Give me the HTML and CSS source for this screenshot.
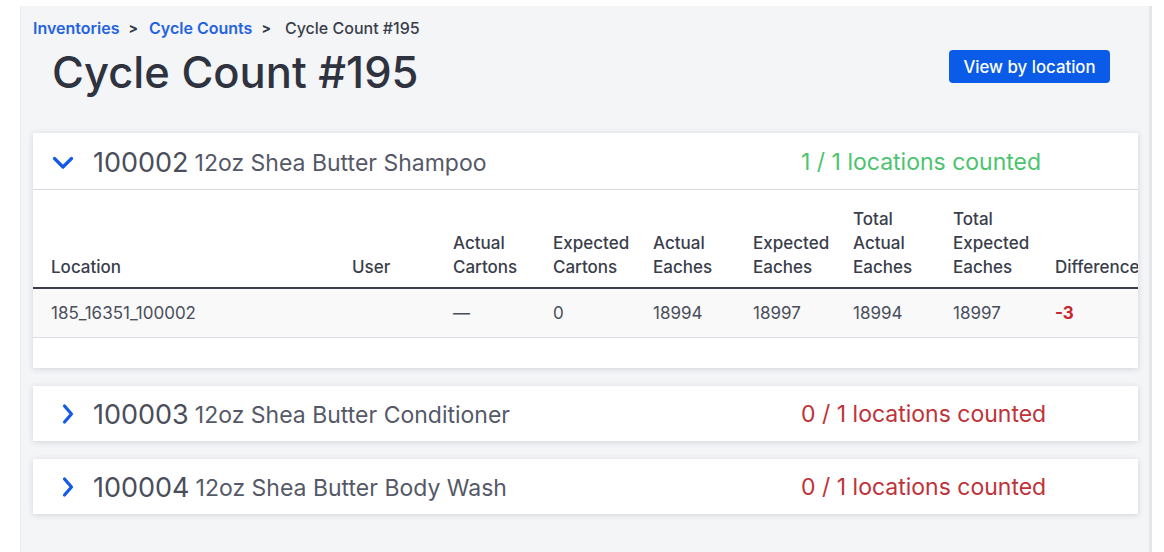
FILE: index.html
```html
<!DOCTYPE html>
<html>
<head>
<meta charset="utf-8">
<link rel="stylesheet" href="styles.css">
</head>
<body>
<div class="frame">
  <div class="main">
    <nav class="crumbs">
      <a class="crumb-link" href="#">Inventories</a>
      <span class="crumb-sep">&gt;</span>
      <a class="crumb-link" href="#">Cycle Counts</a>
      <span class="crumb-sep">&gt;</span>
      <span class="crumb-current">Cycle Count #195</span>
    </nav>
    <div class="page-head">
      <h1 class="page-title">Cycle Count #195</h1>
      <button class="btn-primary">View by location</button>
    </div>

    <section class="card">
      <div class="card-head open">
        <div class="card-title">
          <svg class="chev chev-down" viewBox="0 0 22 14" width="22" height="14"><path d="M2.5 2.5 L11 11 L19.5 2.5" fill="none" stroke="#1559e8" stroke-width="3.2" stroke-linecap="round" stroke-linejoin="round"/></svg>
          <span class="sku">100002</span>
          <span class="pname">12oz Shea Butter Shampoo</span>
        </div>
        <div class="status ok">1 / 1 locations counted</div>
      </div>
      <div class="table-wrap">
        <table class="counts">
          <thead>
            <tr>
              <th class="c-loc">Location</th>
              <th class="c-user">User</th>
              <th>Actual<br>Cartons</th>
              <th>Expected<br>Cartons</th>
              <th>Actual<br>Eaches</th>
              <th>Expected<br>Eaches</th>
              <th>Total<br>Actual<br>Eaches</th>
              <th>Total<br>Expected<br>Eaches</th>
              <th class="c-diff">Difference</th>
            </tr>
          </thead>
          <tbody>
            <tr>
              <td>185_16351_100002</td>
              <td></td>
              <td>—</td>
              <td>0</td>
              <td>18994</td>
              <td>18997</td>
              <td>18994</td>
              <td>18997</td>
              <td class="neg">-3</td>
            </tr>
          </tbody>
        </table>
      </div>
    </section>

    <section class="card">
      <div class="card-head">
        <div class="card-title">
          <svg class="chev chev-right" viewBox="0 0 14 22" width="14" height="22"><path d="M3.5 3 L10.5 11 L3.5 19" fill="none" stroke="#1559e8" stroke-width="3.2" stroke-linecap="round" stroke-linejoin="round"/></svg>
          <span class="sku">100003</span>
          <span class="pname">12oz Shea Butter Conditioner</span>
        </div>
        <div class="status bad">0 / 1 locations counted</div>
      </div>
    </section>

    <section class="card">
      <div class="card-head">
        <div class="card-title">
          <svg class="chev chev-right" viewBox="0 0 14 22" width="14" height="22"><path d="M3.5 3 L10.5 11 L3.5 19" fill="none" stroke="#1559e8" stroke-width="3.2" stroke-linecap="round" stroke-linejoin="round"/></svg>
          <span class="sku">100004</span>
          <span class="pname">12oz Shea Butter Body Wash</span>
        </div>
        <div class="status bad">0 / 1 locations counted</div>
      </div>
    </section>
  </div>
</div>
</body>
</html>
```

FILE: styles.css
```css
* { box-sizing: border-box; }
html, body { margin: 0; padding: 0; background: #ffffff; }
body { font-family: Inter, "Noto Sans", sans-serif; color: #3b3f4c; }

.frame {
  padding: 6px 0 0 20px;
  height: 552px;
  overflow: hidden;
}
.main {
  width: 1132px;
  min-height: 546px;
  background: #f4f5f7;
  border-left: 1px solid #eceef1;
  border-right: 3px solid #e4e6ea;
  padding: 12px 11px 20px 12px;
}

.crumbs {
  display: flex;
  align-items: center;
  font-size: 16px;
  line-height: 20px;
  font-weight: 600;
}
.crumb-link { color: #2563e0; text-decoration: none; }
.crumb-sep { color: #333846; font-weight: 700; margin: 0 11px 0 9px; font-size: 14px; }
.crumb-current { color: #3a3e4a; font-weight: 500; margin-left: 3px; }

.page-head {
  display: flex;
  justify-content: space-between;
  align-items: flex-start;
  margin-top: 10px;
  margin-bottom: 36px;
}
.page-title {
  margin: 0;
  padding-left: 19px;
  font-size: 43.5px;
  line-height: 49px;
  font-weight: 500;
  color: #2f3340;
}
.btn-primary {
  margin-top: 2px;
  margin-right: 28px;
  height: 33px;
  width: 161px;
  border: none;
  border-radius: 4px;
  background: #0b5be9;
  color: #ffffff;
  font-family: Inter, "Noto Sans", sans-serif;
  font-size: 16.8px;
  font-weight: 500;
  padding: 0;
}

.card {
  background: #ffffff;
  box-shadow: 0 1px 6px rgba(40, 45, 60, 0.16);
  margin-bottom: 18px;
  overflow: hidden;
}
.card-head {
  display: grid;
  grid-template-columns: 768px 1fr;
  align-items: center;
  height: 55px;
  padding-top: 2px;
}
.card-head.open { height: 57px; border-bottom: 1px solid #d4d8df; }
.card-title {
  display: flex;
  align-items: center;
  padding-left: 19px;
  white-space: nowrap;
}
.chev { display: block; flex: none; }
.chev-down { margin-right: 19px; margin-top: 1px; }
.chev-right { margin-left: 9px; margin-right: 18px; }
.sku {
  font-size: 27px;
  color: #4a4e5b;
  margin-right: 6px;
}
.pname {
  font-size: 23px;
  color: #555967;
  margin-top: 2px;
}
.status { font-size: 23px; }
.status.ok { color: #4cc36e; }
.status.bad { color: #c0323a; }

.table-wrap { padding-bottom: 30px; }
.counts {
  border-collapse: collapse;
  table-layout: fixed;
  width: 1122px;
  font-size: 17px;
}
.counts th, .counts td { text-align: left; padding-left: 18px; white-space: nowrap; }
.counts th {
  vertical-align: bottom;
  font-weight: 500;
  color: #3a3e4b;
  line-height: 24px;
  padding-top: 17px;
  padding-bottom: 8px;
  border-bottom: 2px solid #3a3e4a;
}
.counts th.c-loc { width: 301px; }
.counts th.c-user { width: 101px; }
.counts th { width: 100px; }
.counts th.c-diff { width: 120px; padding-left: 20px; }
.counts td {
  height: 49px;
  background: #f9f9fa;
  color: #4a4e5a;
  border-bottom: 1px solid #dcdfe5;
}
.counts td.neg { color: #c8252d; font-weight: 700; padding-left: 20px; }
```
